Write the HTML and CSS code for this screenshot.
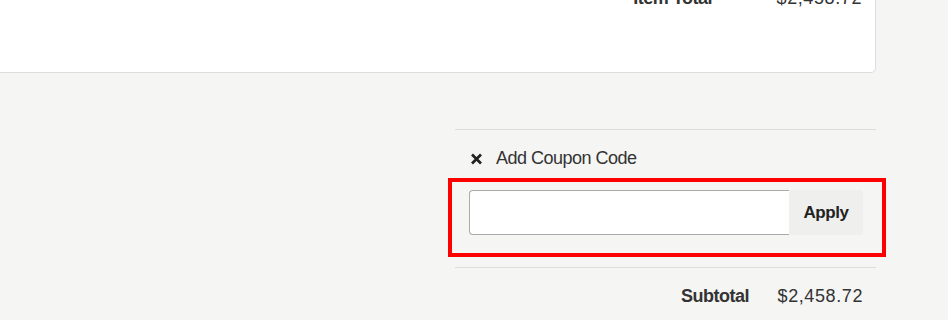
FILE: index.html
```html
<!DOCTYPE html>
<html>
<head>
<meta charset="utf-8">
<link rel="stylesheet" href="styles.css">
</head>
<body>
<div class="page">
  <div class="card">
    <div class="total-row item-total">
      <span class="label">Item Total</span>
      <span class="value">$2,458.72</span>
    </div>
  </div>
  <div class="summary">
    <div class="coupon-toggle">
      <svg class="x-icon" width="13" height="12" viewBox="0 0 13 12"><path d="M2 1.5 L11 10.5 M11 1.5 L2 10.5" stroke="#222" stroke-width="2.7" stroke-linecap="butt"/></svg>
      <span>Add Coupon Code</span>
    </div>
    <div class="coupon-form">
      <input class="coupon-input" type="text">
      <button class="apply-btn">Apply</button>
    </div>
    <div class="subtotal">
      <div class="total-row">
        <span class="label">Subtotal</span>
        <span class="value">$2,458.72</span>
      </div>
    </div>
  </div>
</div>
</body>
</html>
```

FILE: styles.css
```css
html {
  overflow: hidden;
  background: #f5f5f3;
}
body {
  margin: 0;
  padding: 0;
  background: #f5f5f3;
  font-family: "Liberation Sans", Arial, sans-serif;
  color: #333;
}
.page {
  width: 876px;
}
.card {
  margin-top: -20px;
  margin-left: -10px;
  height: 93px;
  box-sizing: border-box;
  background: #fff;
  border: 1px solid #dddddb;
  border-radius: 5px;
  padding-top: 5px;
  padding-right: 13px;
}
.total-row {
  display: flex;
  justify-content: flex-end;
  align-items: baseline;
  font-size: 18px;
  line-height: 24px;
}
.total-row .label {
  font-weight: bold;
  color: #333;
  letter-spacing: -0.5px;
}
.total-row .value {
  width: 86px;
  text-align: right;
  margin-left: 28px;
  color: #333;
  letter-spacing: 0.6px;
}
.item-total .value {
  margin-left: 64px;
}
.summary {
  margin-left: auto;
  width: 421px;
  margin-top: 56px;
  border-top: 1px solid #dddddb;
}
.coupon-toggle {
  display: flex;
  align-items: center;
  height: 46px;
  padding-left: 15px;
  padding-top: 11px;
  box-sizing: border-box;
  font-size: 18px;
  letter-spacing: -0.5px;
  color: #333;
}
.x-icon {
  margin-right: 13px;
  flex: none;
}
.coupon-form {
  display: flex;
  margin-left: -7px;
  margin-right: -10px;
  border: 4px solid #ff0000;
  padding: 8px 19px 18px 17px;
  margin-top: 2px;
}
.coupon-input {
  flex: 1;
  height: 45px;
  box-sizing: border-box;
  border: 1px solid #aaa;
  border-right: none;
  border-radius: 4px 0 0 4px;
  background: #fff;
  margin: 0;
  padding: 0 10px;
  font-family: inherit;
  font-size: 16px;
  outline: none;
}
.apply-btn {
  width: 74px;
  height: 45px;
  border: none;
  border-radius: 0 4px 4px 0;
  background: #efefed;
  font-family: inherit;
  font-size: 17px;
  letter-spacing: -0.4px;
  font-weight: bold;
  color: #222;
  margin: 0;
  padding: 0;
}
.subtotal {
  margin-top: 10px;
  border-top: 1px solid #dddddb;
  padding-top: 16px;
  padding-right: 13px;
}
```
